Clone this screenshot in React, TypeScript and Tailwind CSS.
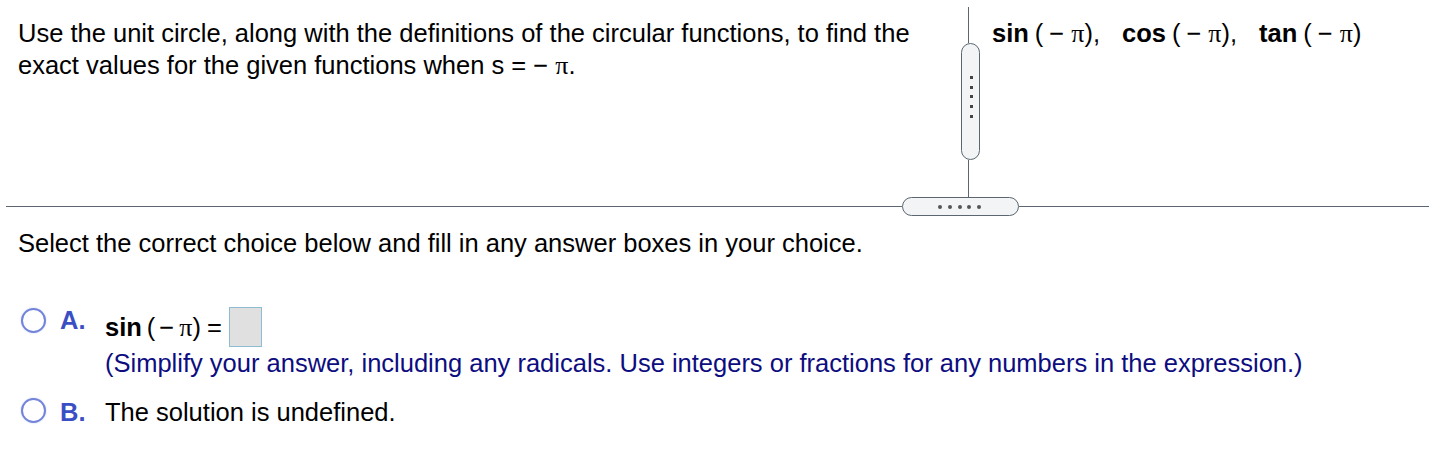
import React from "react"

const lineColor = "bg-[#5c6670]"

function Fn({ name, wide = false, className = "" }: { name: string; wide?: boolean; className?: string }) {
  return (
    <span className={`whitespace-nowrap ${className}`}>
      <span className="font-bold">{name}</span>
      <span className={wide ? "ml-[6px]" : "ml-[5px]"}>(</span>
      <span className={wide ? "ml-[6px]" : "ml-[4px]"}>−</span>
      <span className={`${wide ? "ml-[7px]" : "ml-[5px]"} font-['Liberation_Serif',serif] text-[26px]`}>π</span>
      <span>)</span>
    </span>
  )
}

function Radio({ className = "" }: { className?: string }) {
  return (
    <div
      className={`h-[25px] w-[25px] rounded-full border-[2.5px] border-[#7385da] bg-white shadow-[0_0_2px_#c9d0f2] ${className}`}
    />
  )
}

export default function App() {
  return (
    <div className="h-[472px] w-[1429px] bg-white text-black font-['Liberation_Sans',Arial,sans-serif] text-[25.5px] leading-[32px]">
      {/* top: question + functions */}
      <div className="flex h-[197px]">
        <div className="w-[961px] pl-[18px] pt-[17px]">
          Use the unit circle, along with the definitions of the circular functions, to find the
          <br />
          exact values for the given functions when s = −{" "}
          <span className="font-['Liberation_Serif',serif] text-[26px]">π</span>.
        </div>

        {/* vertical splitter */}
        <div className="flex w-[19px] flex-col pt-[7px]">
          <div className={`ml-[7px] h-[36px] w-px ${lineColor}`} />
          <div className="flex h-[117px] w-[19px] flex-col items-center gap-[6.7px] rounded-full border border-[#5c6670] bg-[#f3f4f6] pt-[32px]">
            {[0, 1, 2, 3, 4].map((i) => (
              <div key={i} className="ml-[1px] h-[3px] w-[3px] bg-[#444]" />
            ))}
          </div>
          <div className={`ml-[7px] w-px flex-1 ${lineColor}`} />
        </div>

        <div className="flex pl-[12px] pt-[17px] whitespace-nowrap">
          <Fn name="sin" wide />
          <span>,</span>
          <Fn name="cos" wide className="ml-[22px]" />
          <span>,</span>
          <Fn name="tan" wide className="ml-[22px]" />
        </div>
      </div>

      {/* horizontal splitter */}
      <div className="flex h-[19px] items-center pl-[6px]">
        <div className={`h-px w-[896px] ${lineColor}`} />
        <div className="flex h-[19px] w-[117px] items-center justify-center gap-[5.7px] rounded-full border border-[#5c6670] bg-[#f3f4f6] pr-[2px]">
          {[0, 1, 2, 3, 4].map((i) => (
            <div key={i} className="h-[4px] w-[4px] rounded-full bg-[#555]" />
          ))}
        </div>
        <div className={`h-px flex-1 ${lineColor}`} />
      </div>

      {/* answer area */}
      <div className="mt-[11px] pl-[18px]">
        Select the correct choice below and fill in any answer boxes in your choice.
      </div>

      <div className="mt-[45px] flex items-start">
        <div className="w-[60px] pl-[21px]">
          <Radio className="mt-[4px]" />
        </div>
        <div className="w-[45px] font-bold text-[#3b4fc4]">A.</div>
        <div className="mt-[3px]">
          <div className="flex h-[40px] items-center">
            <Fn name="sin" />
            <span className="ml-[6px]">=</span>
            <div className="ml-[7px] h-[40px] w-[33px] border border-[#8fbcd2] bg-[#e0e0e0]" />
          </div>
          <div className="text-[#0d0d80]">
            (Simplify your answer, including any radicals. Use integers or fractions for any numbers in the expression.)
          </div>
        </div>
      </div>

      <div className="mt-[17px] flex items-start">
        <div className="w-[60px] pl-[21px]">
          <Radio className="mt-[2px]" />
        </div>
        <div className="w-[45px] font-bold text-[#3b4fc4]">B.</div>
        <div>The solution is undefined.</div>
      </div>
    </div>
  )
}
